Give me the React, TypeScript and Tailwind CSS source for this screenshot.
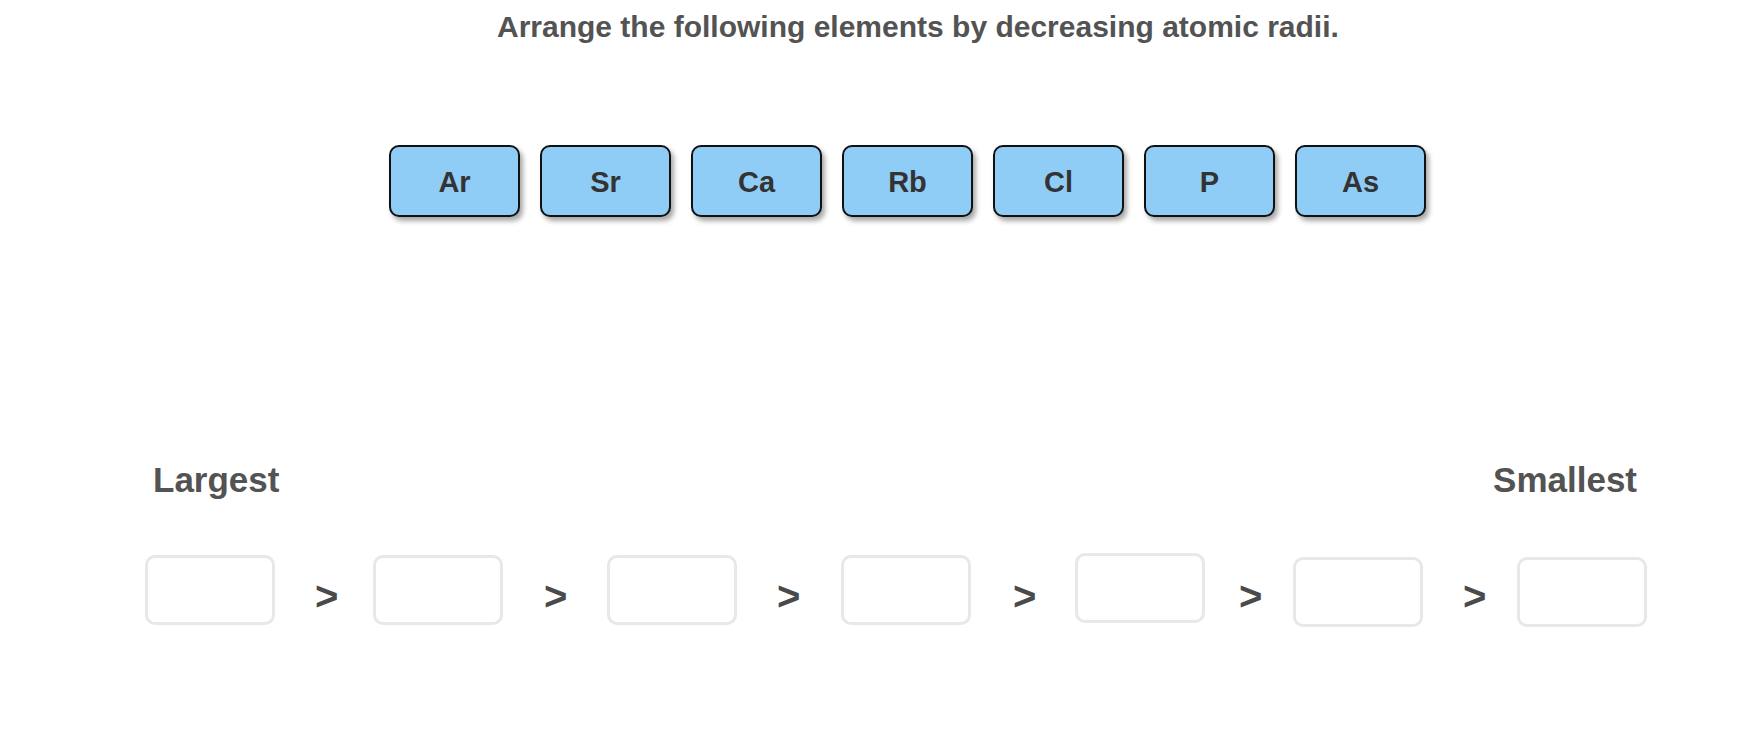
const elements = ["Ar", "Sr", "Ca", "Rb", "Cl", "P", "As"];

// drop targets sit a little unevenly in the original, so each keeps its own offsets
const slots = [
  { box: "ml-[145px] mt-[2px]", arrow: "ml-[40px]" },
  { box: "ml-[36px] mt-[2px]", arrow: "ml-[41px]" },
  { box: "ml-[41px] mt-[2px]", arrow: "ml-[40px]" },
  { box: "ml-[42px] mt-[2px]", arrow: "ml-[42px]" },
  { box: "ml-[40px] mt-0", arrow: "ml-[34px]" },
  { box: "ml-[32px] mt-[4px]", arrow: "ml-[40px]" },
  { box: "ml-[32px] mt-[4px]", arrow: "" },
];

export default function App() {
  return (
    <div className="h-[732px] w-full overflow-hidden bg-white font-['Liberation_Sans',Arial,sans-serif]">
      <h1 className="pl-[497px] pt-[10px] text-[30px] font-bold leading-[34px] text-[#535353]">
        Arrange the following elements by decreasing atomic radii.
      </h1>

      {/* Draggable tiles */}
      <div className="mt-[101px] flex gap-[20px] pl-[389px]">
        {elements.map((el) => (
          <div
            key={el}
            className="flex h-[72px] w-[131px] items-center justify-center rounded-[10px] border-2 border-[#111111] bg-[#8fcdf7] pt-[3px] text-[29px] font-bold text-[#333333] shadow-[3px_4px_5px_rgba(0,0,0,0.35)]"
          >
            {el}
          </div>
        ))}
      </div>

      <div className="mt-[243px] flex justify-between pl-[153px] pr-[101px] text-[35px] font-bold leading-[40px] text-[#535353]">
        <span>Largest</span>
        <span>Smallest</span>
      </div>

      {/* Drop targets */}
      <div className="mt-[53px] flex items-start">
        {slots.map((s, i) => (
          <div key={i} className="flex items-start">
            <div className={`h-[70px] w-[130px] rounded-[10px] border-[3px] border-[#e8e8e8] bg-white ${s.box}`} />
            {s.arrow && (
              <span className={`mt-[23px] block w-[22px] text-center text-[40px] font-bold leading-[40px] text-[#4a4a4a] ${s.arrow}`}>
                &gt;
              </span>
            )}
          </div>
        ))}
      </div>
    </div>
  );
}
